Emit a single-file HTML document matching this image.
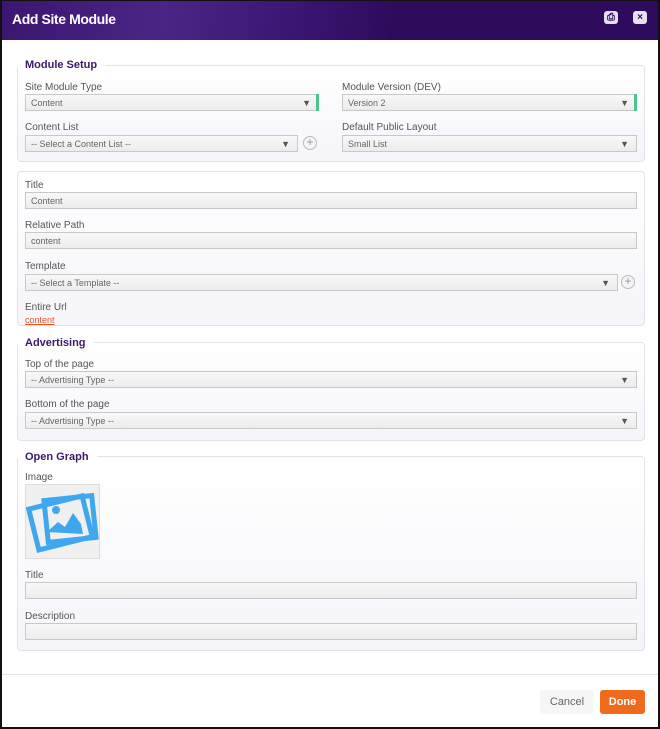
<!DOCTYPE html>
<html><head><style>
*{box-sizing:border-box;margin:0;padding:0}
body{width:660px;height:729px;font-family:"Liberation Sans",sans-serif;background:#fff;position:relative;overflow:hidden}
.frame{position:absolute;inset:0;border:1px solid #111;border-left-width:2px;border-right-width:2px;border-bottom-width:2px}
.hdr{position:absolute;left:0;top:0;width:660px;height:40px;background:linear-gradient(100deg,#3a1670 0%,#4a2585 25%,#3b1572 45%,#2e0a5c 60%,#2e0a5c 100%)}
.hdr h1{position:absolute;left:12px;top:11px;color:#fff;font-size:14px;font-weight:bold;letter-spacing:-0.4px}
.ib{position:absolute;top:11px;width:14px;height:13px;background:#e4e0ec;border-radius:3px;color:#2e0a5c;font-size:10px;font-weight:bold;text-align:center;line-height:13px}
.fs{position:absolute;left:17px;width:628px;border:1px solid #e2e2ea;border-radius:4px;background:linear-gradient(#fff,#f5f5fa)}
.lg{position:absolute;font-size:11px;font-weight:bold;color:#3b1a66;background:#fff;padding:0 8px 0 7px}
.lb{position:absolute;font-size:10px;color:#555}
.in{position:absolute;height:17px;border:1px solid #c8c8c8;background:linear-gradient(#f8f8f8,#ececec);font-size:9px;color:#666;padding:3px 5px;line-height:10px}
.ar{position:absolute;right:7px;top:3px;font-size:9px;color:#555}
.gb{position:absolute;right:-1px;top:-1px;width:3px;height:17px;background:#4ec48a}
.pl{position:absolute;width:14px;height:14px;border:1px solid #bbb;border-radius:50%;color:#999;font-size:12px;line-height:11px;text-align:center;background:#f4f4f4}
a{position:absolute;font-size:9px;color:#e8562a;text-decoration:underline}
</style></head><body>
<div class="hdr"><h1>Add Site Module</h1>
<div class="ib" style="left:604px">⎙</div><div class="ib" style="left:633px">×</div></div>

<div class="fs" style="top:65px;height:97px"></div>
<div class="lg" style="left:18px;top:59px">Module Setup</div>
<div class="lb" style="left:25px;top:82px">Site Module Type</div>
<div class="in" style="left:25px;top:94px;width:294px">Content<span class="ar">▼</span><span class="gb"></span></div>
<div class="lb" style="left:342px;top:82px">Module Version (DEV)</div>
<div class="in" style="left:342px;top:94px;width:295px">Version 2<span class="ar">▼</span><span class="gb"></span></div>
<div class="lb" style="left:25px;top:122px">Content List</div>
<div class="in" style="left:25px;top:135px;width:273px">-- Select a Content List --<span class="ar">▼</span></div>
<div class="pl" style="left:303px;top:136px">+</div>
<div class="lb" style="left:342px;top:122px">Default Public Layout</div>
<div class="in" style="left:342px;top:135px;width:295px">Small List<span class="ar">▼</span></div>

<div class="fs" style="top:171px;height:155px"></div>
<div class="lb" style="left:25px;top:180px">Title</div>
<div class="in" style="left:25px;top:192px;width:612px">Content</div>
<div class="lb" style="left:25px;top:220px">Relative Path</div>
<div class="in" style="left:25px;top:232px;width:612px">content</div>
<div class="lb" style="left:25px;top:261px">Template</div>
<div class="in" style="left:25px;top:274px;width:593px">-- Select a Template --<span class="ar">▼</span></div>
<div class="pl" style="left:621px;top:275px">+</div>
<div class="lb" style="left:25px;top:302px">Entire Url</div>
<a style="left:25px;top:315px">content</a>

<div class="fs" style="top:342px;height:99px"></div>
<div class="lg" style="left:18px;top:337px">Advertising</div>
<div class="lb" style="left:25px;top:359px">Top of the page</div>
<div class="in" style="left:25px;top:371px;width:612px">-- Advertising Type --<span class="ar">▼</span></div>
<div class="lb" style="left:25px;top:399px">Bottom of the page</div>
<div class="in" style="left:25px;top:412px;width:612px">-- Advertising Type --<span class="ar">▼</span></div>

<div class="fs" style="top:456px;height:195px"></div>
<div class="lg" style="left:18px;top:451px">Open Graph</div>
<div class="lb" style="left:25px;top:472px">Image</div>
<div style="position:absolute;left:25px;top:484px;width:75px;height:75px;background:#f0f0f0;border:1px solid #ddd">
<svg width="75" height="75" viewBox="0 0 75 75">
<g fill="none" stroke="#3fa7f0" stroke-width="5">
<rect x="7" y="17" width="55" height="42" transform="rotate(-14 34 38)"/>
<rect x="20" y="13" width="48" height="42" transform="rotate(-6 44 34)"/>
</g>
<circle cx="30" cy="25" r="4" fill="#3fa7f0"/>
<path d="M21 47 L32 37 L39 42 L47 28 L55 39 L57 49 Z" fill="#3fa7f0"/>
</svg></div>
<div class="lb" style="left:25px;top:570px">Title</div>
<div class="in" style="left:25px;top:582px;width:612px"></div>
<div class="lb" style="left:25px;top:611px">Description</div>
<div class="in" style="left:25px;top:623px;width:612px"></div>

<div style="position:absolute;left:0;top:674px;width:660px;height:1px;background:#e4e4e4"></div>
<div style="position:absolute;left:540px;top:690px;width:54px;height:24px;background:#f6f6f6;border-radius:3px;font-size:11px;color:#666;text-align:center;line-height:24px">Cancel</div>
<div style="position:absolute;left:600px;top:690px;width:45px;height:24px;background:#f06a1e;border-radius:3px;font-size:11px;font-weight:bold;color:#fff;text-align:center;line-height:24px">Done</div>
<div class="frame"></div>
</body></html>
